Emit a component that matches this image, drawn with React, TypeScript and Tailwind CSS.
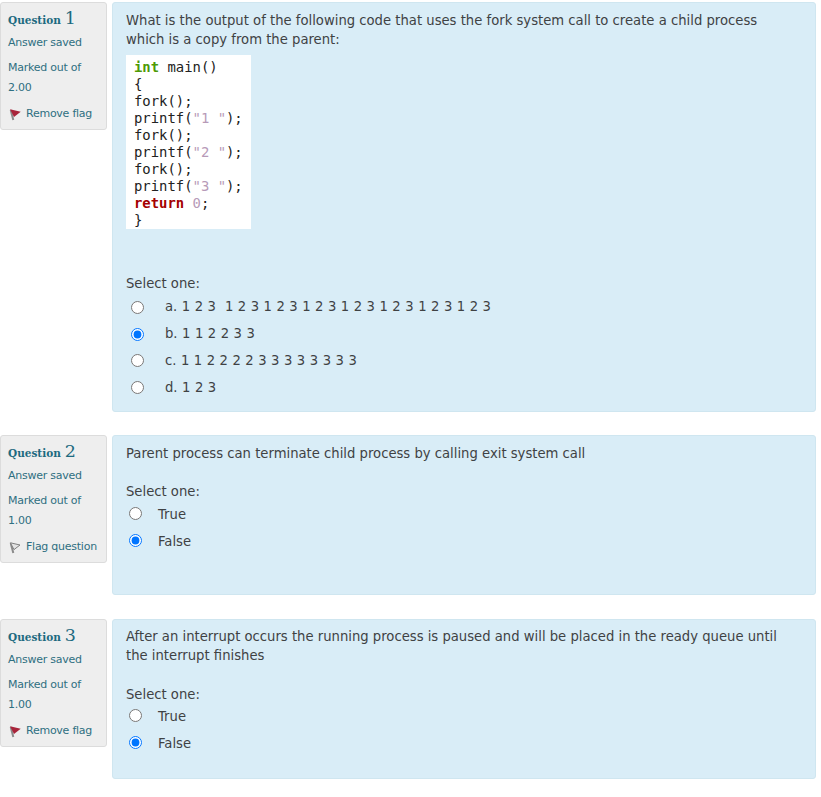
import React from 'react';

const Flag = ({ on }: { on: boolean }) => (
  <svg width="14" height="14" viewBox="0 0 14 14" className="shrink-0">
    <path d="M2.7 3 L5.3 13" fill="none" stroke="#8a8a8a" strokeWidth="2" />
    {on ? (
      <path d="M2 2.3 L12.7 4.7 L6 10 Z" fill="#a8243a" />
    ) : (
      <path d="M2.4 2.8 L12 5 L6 9.6 Z" fill="#e4e4e4" stroke="#808080" strokeWidth="1" />
    )}
  </svg>
);

const Side = ({ n, mark, flagged }: { n: number; mark: string; flagged: boolean }) => (
  <div className="h-[128px] w-[107px] shrink-0 rounded-[3px] border border-[#dcdcdc] bg-[#eeeeee] pl-[7px] pt-[2px] text-[11px] tracking-[-0.25px] text-[#2f6f81]">
    <div className="flex h-[26px] items-baseline gap-[4px] leading-[26px] tracking-normal text-[#1d6a80]">
      <span className="font-['DejaVu_Serif',serif] text-[10.5px] font-bold">Question</span>
      <span className="font-['DejaVu_Serif',serif] text-[17.5px] font-medium">{n}</span>
    </div>
    <div className="mt-[3px] leading-[18px]">Answer saved</div>
    <div className="mt-[6px] leading-[19.5px]">
      Marked out of
      <br />
      {mark}
    </div>
    <div className="mt-[8px] flex items-center gap-[4px] whitespace-nowrap leading-[18px]">
      <Flag on={flagged} />
      <span>{flagged ? 'Remove flag' : 'Flag question'}</span>
    </div>
  </div>
);

const Option = ({ label, checked, tall }: { label: string; checked?: boolean; tall?: boolean }) => (
  <label className={`flex items-center ${tall ? 'h-[26.7px] pl-[5px]' : 'h-[27px] pl-[3px]'}`}>
    <input type="radio" readOnly checked={!!checked} className="m-0 h-[13px] w-[13px] shrink-0" />
    {tall ? (
      <span className="ml-[21px] whitespace-pre [word-spacing:0.3px]">{label}</span>
    ) : (
      <span className="ml-[16px] whitespace-pre pt-[2px]">{label}</span>
    )}
  </label>
);

const CodeImage = () => (
  <div className="mt-[6px] h-[174px] w-[125px] bg-white pl-[8px] pt-[4px] font-['DejaVu_Sans_Mono',monospace] text-[13.9px] leading-[17px] text-[#222222]">
    <div><span className="font-bold text-[#4e9a06]">int</span> main()</div>
    <div>{'{'}</div>
    <div>fork();</div>
    <div>printf(<span className="text-[#b79ab8]">"1 "</span>);</div>
    <div>fork();</div>
    <div>printf(<span className="text-[#b79ab8]">"2 "</span>);</div>
    <div>fork();</div>
    <div>printf(<span className="text-[#b79ab8]">"3 "</span>);</div>
    <div><span className="font-bold text-[#a40000]">return</span> <span className="text-[#b79ab8]">0</span>;</div>
    <div>{'}'}</div>
  </div>
);

export default function App() {
  return (
    <div className="min-h-[797px] w-[821px] overflow-hidden bg-white pt-[2px] font-['DejaVu_Sans',sans-serif] text-[13.2px] text-[#3f4244]">
      {/* Question 1 */}
      <div className="flex items-start gap-[5px]">
        <Side n={1} mark="2.00" flagged />
        <div className="h-[410px] w-[704px] rounded-[3px] border border-[#cfe6f0] bg-[#d9edf7] px-[13px] pt-[8px]">
          <div className="leading-[19px]">
            What is the output of the following code that uses the fork system call to create a child process
            <br />
            which is a copy from the parent:
          </div>
          <CodeImage />
          <div className="mt-[45px] leading-[19px]">Select one:</div>
          <div className="mt-[1px]">
            <Option tall label="a. 1 2 3  1 2 3 1 2 3 1 2 3 1 2 3 1 2 3 1 2 3 1 2 3" />
            <Option tall checked label="b. 1 1 2 2 3 3" />
            <Option tall label="c. 1 1 2 2 2 2 3 3 3 3 3 3 3 3" />
            <Option tall label="d. 1 2 3" />
          </div>
        </div>
      </div>

      {/* Question 2 */}
      <div className="mt-[23px] flex items-start gap-[5px]">
        <Side n={2} mark="1.00" flagged={false} />
        <div className="h-[160px] w-[704px] rounded-[3px] border border-[#cfe6f0] bg-[#d9edf7] px-[13px] pt-[8px]">
          <div className="leading-[19px]">Parent process can terminate child process by calling exit system call</div>
          <div className="mt-[19px] leading-[19px]">Select one:</div>
          <div className="mt-[-1px]">
            <Option label="True" />
            <Option checked label="False" />
          </div>
        </div>
      </div>

      {/* Question 3 */}
      <div className="mt-[24px] flex items-start gap-[5px]">
        <Side n={3} mark="1.00" flagged />
        <div className="h-[160px] w-[704px] rounded-[3px] border border-[#cfe6f0] bg-[#d9edf7] px-[13px] pt-[7px]">
          <div className="leading-[19px]">
            After an interrupt occurs the running process is paused and will be placed in the ready queue until
            <br />
            the interrupt finishes
          </div>
          <div className="mt-[20px] leading-[19px]">Select one:</div>
          <div className="mt-[-2px]">
            <Option label="True" />
            <Option checked label="False" />
          </div>
        </div>
      </div>
    </div>
  );
}
